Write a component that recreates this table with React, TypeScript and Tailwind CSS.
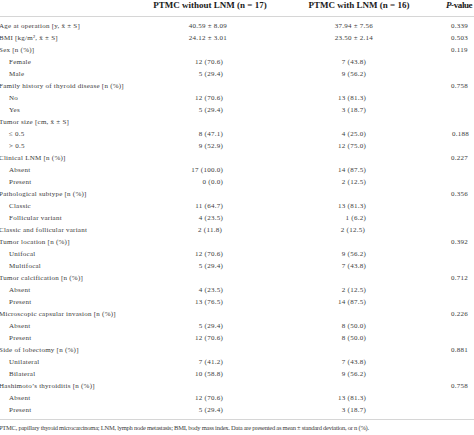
type Row = {
  label: string;
  sub?: boolean;
  a?: string;
  b?: string;
  p?: string;
  mean?: boolean;
};

const ROWS: Row[] = [
  { label: "Age at operation [y, x̄ ± S]", a: "40.59 ± 8.09", b: "37.94 ± 7.56", p: "0.339", mean: true },
  { label: "BMI [kg/m², x̄ ± S]", a: "24.12 ± 3.01", b: "23.50 ± 2.14", p: "0.503", mean: true },
  { label: "Sex [n (%)]", p: "0.119" },
  { label: "Female", sub: true, a: "12 (70.6)", b: "7 (43.8)" },
  { label: "Male", sub: true, a: "5 (29.4)", b: "9 (56.2)" },
  { label: "Family history of thyroid disease [n (%)]", p: "0.758" },
  { label: "No", sub: true, a: "12 (70.6)", b: "13 (81.3)" },
  { label: "Yes", sub: true, a: "5 (29.4)", b: "3 (18.7)" },
  { label: "Tumor size [cm, x̄ ± S]" },
  { label: "≤ 0.5", sub: true, a: "8 (47.1)", b: "4 (25.0)", p: "0.188" },
  { label: "> 0.5", sub: true, a: "9 (52.9)", b: "12 (75.0)" },
  { label: "Clinical LNM [n (%)]", p: "0.227" },
  { label: "Absent", sub: true, a: "17 (100.0)", b: "14 (87.5)" },
  { label: "Present", sub: true, a: "0 (0.0)", b: "2 (12.5)" },
  { label: "Pathological subtype [n (%)]", p: "0.356" },
  { label: "Classic", sub: true, a: "11 (64.7)", b: "13 (81.3)" },
  { label: "Follicular variant", sub: true, a: "4 (23.5)", b: "1 (6.2)" },
  { label: "Classic and follicular variant", a: "2 (11.8)", b: "2 (12.5)" },
  { label: "Tumor location [n (%)]", p: "0.392" },
  { label: "Unifocal", sub: true, a: "12 (70.6)", b: "9 (56.2)" },
  { label: "Multifocal", sub: true, a: "5 (29.4)", b: "7 (43.8)" },
  { label: "Tumor calcification [n (%)]", p: "0.712" },
  { label: "Absent", sub: true, a: "4 (23.5)", b: "2 (12.5)" },
  { label: "Present", sub: true, a: "13 (76.5)", b: "14 (87.5)" },
  { label: "Microscopic capsular invasion [n (%)]", p: "0.226" },
  { label: "Absent", sub: true, a: "5 (29.4)", b: "8 (50.0)" },
  { label: "Present", sub: true, a: "12 (70.6)", b: "8 (50.0)" },
  { label: "Side of lobectomy [n (%)]", p: "0.881" },
  { label: "Unilateral", sub: true, a: "7 (41.2)", b: "7 (43.8)" },
  { label: "Bilateral", sub: true, a: "10 (58.8)", b: "9 (56.2)" },
  { label: "Hashimoto’s thyroiditis [n (%)]", p: "0.758" },
  { label: "Absent", sub: true, a: "12 (70.6)", b: "13 (81.3)" },
  { label: "Present", sub: true, a: "5 (29.4)", b: "3 (18.7)" },
];

export default function App() {
  return (
    <div
      className="w-[474px] h-[435px] overflow-hidden bg-white text-[#3a3a3a]"
      style={{ fontFamily: '"Liberation Serif", "Times New Roman", serif' }}
    >
      {/* Header */}
      <div className="flex h-[16px] items-start text-[9px] font-bold leading-[11px] text-[#1a1a1a] whitespace-nowrap">
        <div className="w-[150px] shrink-0" />
        <div className="w-[120px] shrink-0 text-center">PTMC without LNM (n = 17)</div>
        <div className="w-[30px] shrink-0" />
        <div className="w-[118px] shrink-0 text-center">PTMC with LNM (n = 16)</div>
        <div className="w-[28px] shrink-0" />
        <div className="shrink-0 tracking-[-0.4px]">
          <span className="italic">P</span>-value
        </div>
      </div>
      <div className="h-px bg-[#d6d6d6]" />

      {/* Body */}
      <div className="pt-[3px]">
        {ROWS.map((r, i) => (
          <div key={i} className="flex h-[12px] items-center text-[7px] leading-[12px] tracking-[0.25px] whitespace-nowrap">
            <div className={`w-[160px] shrink-0 ${r.sub ? "pl-[9px]" : "-ml-[1px]"}`}>{r.label}</div>
            <div className={`shrink-0 text-right ${r.mean ? "w-[68px]" : "w-[63px]"}`}>{r.a}</div>
            <div className={`shrink-0 text-right ${r.mean ? "w-[146px]" : "w-[143px]"}`}>{r.b}</div>
            <div className={`shrink-0 ${r.mean ? "pl-[78px]" : "pl-[86px]"}`}>{r.p}</div>
          </div>
        ))}
      </div>

      {/* Footnote */}
      <div className="mt-[3px] h-px bg-[#d6d6d6]" />
      <div className="-ml-[1px] pt-[3px] text-[6.5px] leading-[9px] tracking-[-0.25px] whitespace-nowrap">
        PTMC, papillary thyroid microcarcinoma; LNM, lymph node metastasis; BMI, body mass index. Data are presented
        as mean ± standard deviation, or n (%).
      </div>
    </div>
  );
}
